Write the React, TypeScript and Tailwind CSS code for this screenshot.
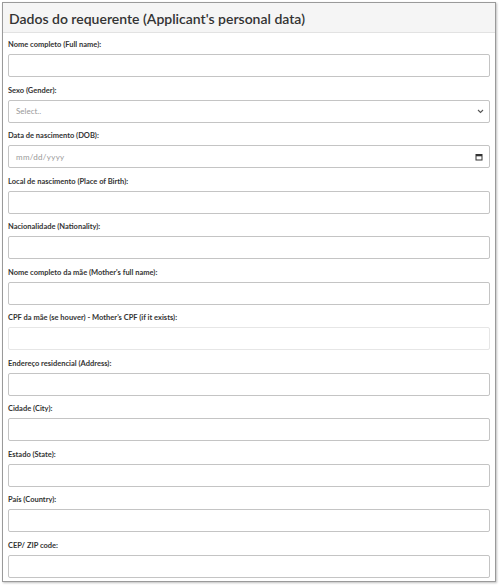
import React from "react";

const fields: { label: string; kind?: "select" | "date" | "light" }[] = [
  { label: "Nome completo (Full name):" },
  { label: "Sexo (Gender):", kind: "select" },
  { label: "Data de nascimento (DOB):", kind: "date" },
  { label: "Local de nascimento (Place of Birth):" },
  { label: "Nacionalidade (Nationality):" },
  { label: "Nome completo da mãe (Mother's full name):" },
  { label: "CPF da mãe (se houver) - Mother's CPF (if it exists):", kind: "light" },
  { label: "Endereço residencial (Address):" },
  { label: "Cidade (City):" },
  { label: "Estado (State):" },
  { label: "País (Country):" },
  { label: "CEP/ ZIP code:" },
];

function Field({ label, kind }: { label: string; kind?: string }) {
  const box =
    "h-[23px] w-full rounded-[2px] border bg-white flex items-center px-[7px] text-[8px] text-[#999]";
  return (
    <div className="flex flex-col">
      <div className="h-[12px] leading-[12px] mb-[3px] text-[7.5px] font-bold text-[#333]">{label}</div>
      {kind === "select" ? (
        <div className={box + " border-[#c4c4c4] justify-between"}>
          <span>Select..</span>
          <svg width="7" height="5" viewBox="0 0 7 5" className="mr-[-2px]">
            <path d="M1 1 L3.5 3.5 L6 1" fill="none" stroke="#555" strokeWidth="1.1" />
          </svg>
        </div>
      ) : kind === "date" ? (
        <div className={box + " border-[#c4c4c4] justify-between"}>
          <span className="tracking-[0.3px]">mm/dd/yyyy</span>
          <svg width="8" height="8" viewBox="0 0 8 8" className="mr-[-1px]">
            <rect x="1" y="1.5" width="6" height="5.5" fill="none" stroke="#333" strokeWidth="1" />
            <rect x="1" y="1.5" width="6" height="1.8" fill="#333" />
          </svg>
        </div>
      ) : kind === "light" ? (
        <div className={box + " border-[#e6e6e6]"} />
      ) : (
        <div className={box + " border-[#c4c4c4]"} />
      )}
    </div>
  );
}

export default function App() {
  return (
    <div className="w-[500px] h-[585px] bg-white pt-[2px] pl-[2px]" style={{ fontFamily: "Lato, 'Open Sans', sans-serif" }}>
      <div className="w-[494px] h-[580px] border border-[#9a9a9a] shadow-[1px_1px_2px_rgba(0,0,0,0.25)] flex flex-col">
        <div className="h-[30px] bg-[#f5f5f5] border-b border-[#e2e2e2] flex items-center pt-[2px] px-[6px] text-[14px] font-semibold text-[#333]">
          Dados do requerente (Applicant's personal data)
        </div>
        <div className="flex flex-col gap-[7.5px] pt-[6px] px-[5px]">
          {fields.map((f) => (
            <Field key={f.label} label={f.label} kind={f.kind} />
          ))}
        </div>
      </div>
    </div>
  );
}
